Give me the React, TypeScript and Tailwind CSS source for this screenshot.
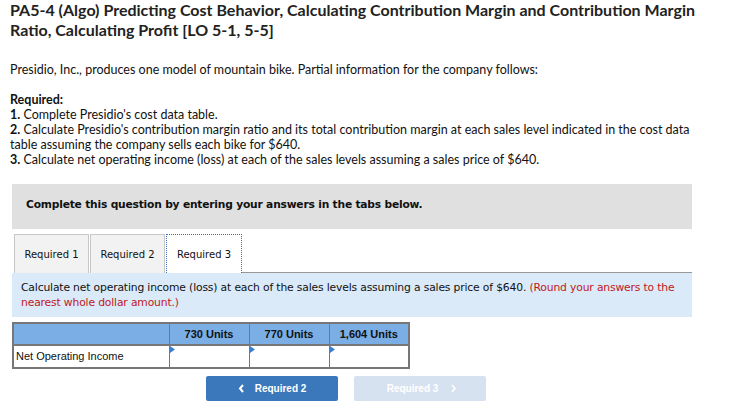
import React from "react";

const Tri = () => (
  <svg width="5" height="7" viewBox="0 0 5 7" className="absolute left-0 top-0">
    <path d="M0 0 L5 3.5 L0 7 Z" fill="#3d7fd0" />
  </svg>
);

export default function App() {
  return (
    <div className="w-[746px] h-[410px] bg-white overflow-hidden text-[#111]" style={{ fontFamily: "Lato, 'Open Sans', sans-serif" }}>
      <div className="pl-[10px] pt-[0px]">
        <h1 className="w-[705px] text-[16px] leading-[20px] font-bold text-[#222]">
          PA5-4 (Algo) Predicting Cost Behavior, Calculating Contribution Margin and Contribution Margin Ratio, Calculating Profit [LO 5-1, 5-5]
        </h1>
        <p className="mt-[22px] text-[12.5px] leading-[16px]">
          Presidio, Inc., produces one model of mountain bike. Partial information for the company follows:
        </p>
        <div className="mt-[14px] text-[12.5px] leading-[15px] pr-[30px]">
          <div className="font-bold">Required:</div>
          <div><b>1.</b> Complete Presidio's cost data table.</div>
          <div><b>2.</b> Calculate Presidio's contribution margin ratio and its total contribution margin at each sales level indicated in the cost data table assuming the company sells each bike for $640.</div>
          <div><b>3.</b> Calculate net operating income (loss) at each of the sales levels assuming a sales price of $640.</div>
        </div>
      </div>

      <div className="ml-[12px] w-[680px] mt-[17px]" style={{ fontFamily: "Verdana, 'DejaVu Sans', sans-serif" }}>
        <div className="h-[45px] bg-[#e0e0e0] flex items-center pl-[14px] pb-[2px]">
          <span className="text-[10.7px] font-bold tracking-[-0.2px]">Complete this question by entering your answers in the tabs below.</span>
        </div>
        <div className="mt-[5px] flex items-end h-[39px] pl-[2px]">
          <div className="w-[75px] h-[39px] bg-[#f2f2f2] border border-[#c8c8c8] border-b-0 flex items-center justify-center text-[10px]">Required 1</div>
          <div className="ml-[1px] w-[75px] h-[39px] bg-[#f2f2f2] border border-[#c8c8c8] border-b-0 flex items-center justify-center text-[10px]">Required 2</div>
          <div className="ml-[1px] w-[76px] h-[39px] bg-white border border-dotted border-[#3a6fb8] border-b-0 flex items-center justify-center text-[10px]">Required 3</div>
          <div className="flex-1 h-[39px] border-b border-[#999]" />
        </div>
        <div className="bg-[#dbeaf8] h-[44px] pl-[9px] pt-[7px] text-[10.75px] leading-[15px] tracking-[-0.15px]">
          Calculate net operating income (loss) at each of the sales levels assuming a sales price of $640. <span className="text-[#c0171d]">(Round your answers to the nearest whole dollar amount.)</span>
        </div>
      </div>

      <div className="ml-[12px] mt-[5px]" style={{ fontFamily: "'Liberation Sans', Arial, sans-serif" }}>
        <table className="border-collapse text-[11px]">
          <tbody>
            <tr className="h-[22px] bg-[#7aaee5]">
              <td className="w-[156px] border-2 border-[#777] border-r-1"></td>
              <td className="w-[80px] border-y-2 border-x border-[#777] text-center font-bold">730 Units</td>
              <td className="w-[80px] border-y-2 border-x border-[#777] text-center font-bold">770 Units</td>
              <td className="w-[80px] border-2 border-l-1 border-[#777] text-center font-bold">1,604 Units</td>
            </tr>
            <tr className="h-[23px]">
              <td className="border-2 border-t-0 border-r-1 border-[#777] pl-[2px]">Net Operating Income</td>
              <td className="border border-b-2 border-t-0 border-[#777] relative"><Tri /></td>
              <td className="border border-b-2 border-t-0 border-[#777] relative"><Tri /></td>
              <td className="border-2 border-l-1 border-t-0 border-[#777] relative"><Tri /></td>
            </tr>
          </tbody>
        </table>
      </div>

      <div className="mt-[7px] ml-[206px] flex gap-[16px]" style={{ fontFamily: "'Liberation Sans', Arial, sans-serif" }}>
        <div className="w-[132px] h-[25px] bg-[#3b77bb] rounded-[2px] flex items-center justify-center text-white text-[10px] font-bold">
          <svg width="7" height="9" viewBox="0 0 7 9" className="mr-[10px]"><path d="M5 1 L2 4.5 L5 8" stroke="white" strokeWidth="2" fill="none" /></svg>
          Required 2
        </div>
        <div className="w-[132px] h-[25px] bg-[#d7e2f0] rounded-[2px] flex items-center justify-center text-white text-[10px] font-bold">
          <span className="w-[4px]" />
          Required 3
          <svg width="7" height="9" viewBox="0 0 7 9" className="ml-[12px]"><path d="M2 1 L5 4.5 L2 8" stroke="white" strokeWidth="1.5" fill="none" /></svg>
        </div>
      </div>
    </div>
  );
}
